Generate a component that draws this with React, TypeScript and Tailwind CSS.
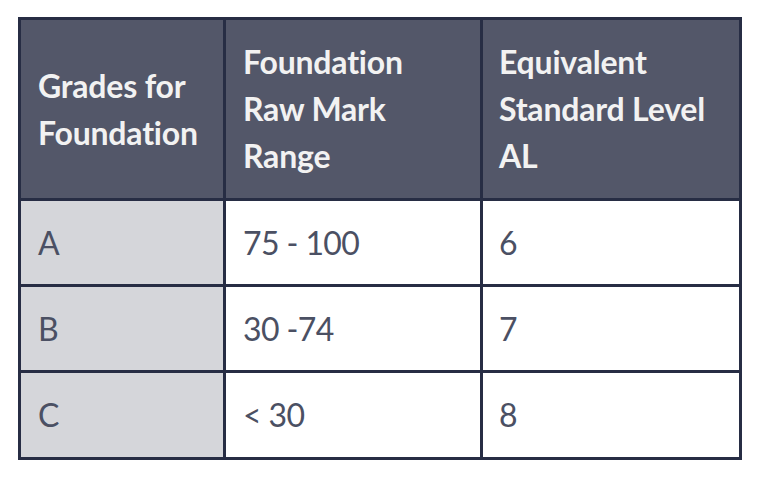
import React from "react";

const rows = [
  ["A", "75 - 100", "6"],
  ["B", "30 -74", "7"],
  ["C", "< 30", "8"],
];

export default function App() {
  return (
    <div className="w-[768px] h-[482px] bg-white pl-[18px] pt-[17px]" style={{ fontFamily: "Lato, 'Open Sans', sans-serif" }}>
      <table className="table-fixed border-collapse w-[721px] border-[3px] border-[#272d44]">
        <colgroup>
          <col className="w-[205px]" />
          <col className="w-[257px]" />
          <col className="w-[259px]" />
        </colgroup>
        <thead>
          <tr className="bg-[#535769] text-[#f2f2f2] font-bold text-[32px] leading-[47px] tracking-[-0.2px]">
            <th className="border-[3px] border-[#272d44] text-left align-middle pl-[17px] pr-[4px] pt-[18px] pb-[19px] font-bold whitespace-nowrap">Grades for<br />Foundation</th>
            <th className="border-[3px] border-[#272d44] text-left align-middle pl-[17px] pr-[4px] pt-[18px] pb-[19px] font-bold whitespace-nowrap">Foundation<br />Raw Mark<br />Range</th>
            <th className="border-[3px] border-[#272d44] text-left align-middle pl-[16px] pr-[4px] pt-[18px] pb-[19px] font-bold whitespace-nowrap">Equivalent<br />Standard Level<br />AL</th>
          </tr>
        </thead>
        <tbody>
          {rows.map((r, i) => (
            <tr key={r[0]} className="text-[32px] leading-[47px] text-[#4b5063] tracking-[-0.6px]">
              <td className={`border-[3px] border-[#272d44] bg-[#d5d6da] px-[17px] pt-[18px] ${i === 2 ? "pb-[19px]" : "pb-[18px]"}`}>{r[0]}</td>
              <td className={`border-[3px] border-[#272d44] bg-white px-[17px] pt-[18px] ${i === 2 ? "pb-[19px]" : "pb-[18px]"}`}>{r[1]}</td>
              <td className={`border-[3px] border-[#272d44] bg-white px-[16px] pt-[18px] ${i === 2 ? "pb-[19px]" : "pb-[18px]"}`}>{r[2]}</td>
            </tr>
          ))}
        </tbody>
      </table>
    </div>
  );
}
